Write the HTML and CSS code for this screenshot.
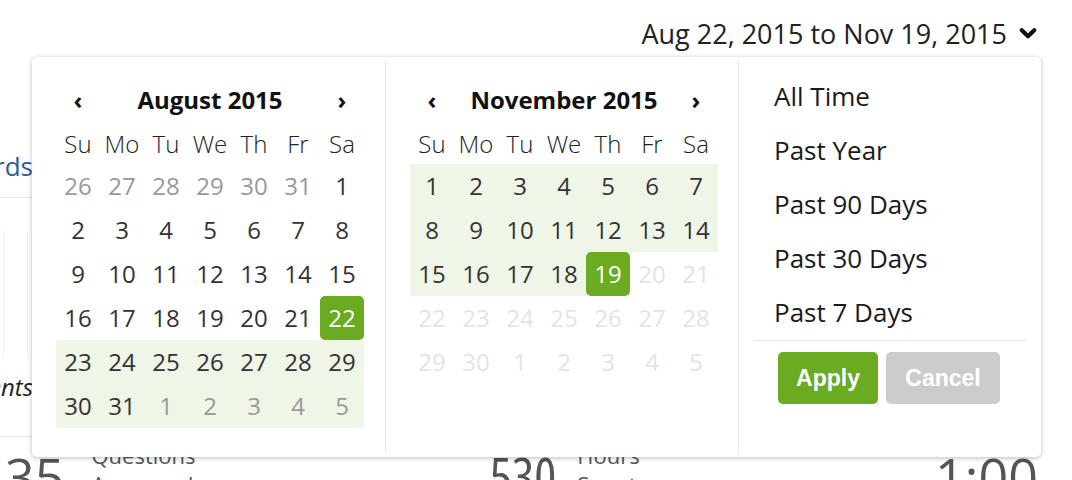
FILE: index.html
```html
<!DOCTYPE html>
<html lang="en">
<head>
<meta charset="utf-8">
<title>Date range picker</title>
<link rel="stylesheet" href="styles.css">
</head>
<body>
<div class="page">
  <header class="topbar">
    <div class="range-toggle">
      <span>Aug 22, 2015 to Nov 19, 2015</span>
      <svg class="chev" viewBox="0 0 17 11" aria-hidden="true"><polyline points="2.3,2.3 8.5,8.3 14.7,2.3" fill="none" stroke="#111" stroke-width="4.2" stroke-linecap="round" stroke-linejoin="round"/></svg>
    </div>
  </header>
  <nav class="tabs">
    <div class="clip tab-link"><span>Leaderboards</span></div>
  </nav>
  <section class="chart">
    <div class="chart-box"></div>
    <div class="clip legend"><span>Assignments</span></div>
  </section>
  <section class="stats">
    <div class="stat"><span class="num">35</span><span class="label">Questions<br>Answered</span></div>
    <div class="stat stat-tight"><span class="num narrow">530</span><span class="label">Hours<br>Spent</span></div>
    <div class="stat"><span class="num">1:00</span></div>
  </section>
</div>

<div class="picker">
  <div class="cal cal-a">
    <div class="grid">
      <div class="nav">&lsaquo;</div><div class="month">August 2015</div><div class="nav">&rsaquo;</div>
      <div class="wd">Su</div><div class="wd">Mo</div><div class="wd">Tu</div><div class="wd">We</div><div class="wd">Th</div><div class="wd">Fr</div><div class="wd">Sa</div>
      <div class="d off">26</div><div class="d off">27</div><div class="d off">28</div><div class="d off">29</div><div class="d off">30</div><div class="d off">31</div><div class="d">1</div>
      <div class="d">2</div><div class="d">3</div><div class="d">4</div><div class="d">5</div><div class="d">6</div><div class="d">7</div><div class="d">8</div>
      <div class="d">9</div><div class="d">10</div><div class="d">11</div><div class="d">12</div><div class="d">13</div><div class="d">14</div><div class="d">15</div>
      <div class="d">16</div><div class="d">17</div><div class="d">18</div><div class="d">19</div><div class="d">20</div><div class="d">21</div><div class="d sel">22</div>
      <div class="d in">23</div><div class="d in">24</div><div class="d in">25</div><div class="d in">26</div><div class="d in">27</div><div class="d in">28</div><div class="d in">29</div>
      <div class="d in">30</div><div class="d in">31</div><div class="d in off">1</div><div class="d in off">2</div><div class="d in off">3</div><div class="d in off">4</div><div class="d in off">5</div>
    </div>
  </div>
  <div class="cal cal-b">
    <div class="grid">
      <div class="nav">&lsaquo;</div><div class="month">November 2015</div><div class="nav">&rsaquo;</div>
      <div class="wd">Su</div><div class="wd">Mo</div><div class="wd">Tu</div><div class="wd">We</div><div class="wd">Th</div><div class="wd">Fr</div><div class="wd">Sa</div>
      <div class="d in">1</div><div class="d in">2</div><div class="d in">3</div><div class="d in">4</div><div class="d in">5</div><div class="d in">6</div><div class="d in">7</div>
      <div class="d in">8</div><div class="d in">9</div><div class="d in">10</div><div class="d in">11</div><div class="d in">12</div><div class="d in">13</div><div class="d in">14</div>
      <div class="d in">15</div><div class="d in">16</div><div class="d in">17</div><div class="d in">18</div><div class="d sel">19</div><div class="d dis">20</div><div class="d dis">21</div>
      <div class="d dis">22</div><div class="d dis">23</div><div class="d dis">24</div><div class="d dis">25</div><div class="d dis">26</div><div class="d dis">27</div><div class="d dis">28</div>
      <div class="d dis">29</div><div class="d dis">30</div><div class="d dis">1</div><div class="d dis">2</div><div class="d dis">3</div><div class="d dis">4</div><div class="d dis">5</div>
    </div>
  </div>
  <div class="ranges">
    <ul class="range-list">
      <li>All Time</li>
      <li>Past Year</li>
      <li>Past 90 Days</li>
      <li>Past 30 Days</li>
      <li>Past 7 Days</li>
    </ul>
    <div class="sep"></div>
    <div class="actions">
      <button class="btn apply" type="button">Apply</button>
      <button class="btn cancel" type="button">Cancel</button>
    </div>
  </div>
</div>
</body>
</html>
```

FILE: styles.css
```css
* { box-sizing: border-box; }
html, body { margin: 0; padding: 0; }
body {
  width: 1072px;
  height: 480px;
  overflow: hidden;
  position: relative;
  background: #fff;
  color: #222;
  font-family: "Open Sans", "DejaVu Sans", sans-serif;
}

/* ---------- page underneath ---------- */
.page { display: flex; flex-direction: column; }

.topbar {
  height: 57px;
  padding: 15px 35px 0 0;
  display: flex;
  justify-content: flex-end;
  align-items: flex-start;
}
.range-toggle {
  display: flex;
  align-items: center;
  gap: 12px;
  font-size: 27px;
  line-height: 37px;
  color: #222;
}
.chev { width: 18px; height: 11px; display: block; }

.clip {
  width: 33px;
  display: flex;
  justify-content: flex-end;
  white-space: nowrap;
}

.tabs {
  margin-top: 92px;
  height: 49px;
  margin-right: 36px;
  border-bottom: 1px solid #e6e6e6;
}
.tab-link {
  font-size: 26px;
  line-height: 35px;
  color: #2d5b94;
}

.chart {
  height: 239px;
  margin-right: 36px;
  padding-top: 32px;
  border-bottom: 1px solid #e6e6e6;
}
.chart-box {
  width: 25px;
  height: 128px;
  margin-left: 3px;
  border-left: 1px solid #f1f1f1;
  border-right: 1px solid #f1f1f1;
}
.legend {
  margin-top: 12px;
  font-size: 24px;
  line-height: 33px;
  font-style: italic;
  color: #222;
}

.stats {
  margin-top: 3px;
  display: grid;
  grid-template-columns: 485px 445px auto;
  padding-left: 5px;
  height: 41px;
  overflow: hidden;
  color: #555;
}
.stat { display: flex; align-items: flex-start; gap: 27px; }
.stat-tight { gap: 21px; }
.num { font-size: 52px; line-height: 71px; }
.num.narrow { font-stretch: 75%; }
.label { font-size: 22px; line-height: 29px; padding-top: 1px; }

/* ---------- picker overlay ---------- */
.picker {
  position: absolute;
  left: 32px;
  top: 57px;
  width: 1009px;
  height: 400px;
  padding: 4px;
  background: #fff;
  border-radius: 5px;
  box-shadow: 0 1px 5px rgba(0, 0, 0, 0.28);
  display: flex;
}

.cal {
  border-right: 1px solid #e6e6e6;
  padding-top: 15px;
}
.cal-a { width: 350px; padding-left: 20px; }
.cal-b { width: 353px; padding-left: 24px; }

.grid {
  display: grid;
  grid-template-columns: repeat(7, 44px);
  grid-auto-rows: 44px;
  font-size: 24px;
  line-height: 44px;
  text-align: center;
}
.nav { font-weight: 700; color: #111; padding-top: 2px; }
.month { grid-column: span 5; font-weight: 700; color: #111; padding-top: 2px; }
.wd { font-weight: 300; color: #222; padding-top: 2px; }
.d { color: #333; }
.d.off { color: #999; }
.d.dis { color: #e4e4e4; }
.d.in { background: #eff5e7; }
.d.sel { background: #6bab22; color: #fff; border-radius: 5px; }

.ranges {
  flex: 1;
  display: flex;
  flex-direction: column;
  padding-top: 8px;
}
.range-list {
  list-style: none;
  margin: 0;
  padding: 0;
}
.range-list li {
  height: 54px;
  line-height: 54px;
  padding-left: 35px;
  font-size: 26px;
  color: #1a1a1a;
}
.sep {
  margin: 1px 11px 0 15px;
  border-top: 1px solid #e6e6e6;
}
.actions {
  margin-top: 11px;
  display: flex;
  justify-content: center;
  gap: 8px;
  padding-left: 2px;
}
.btn {
  height: 52px;
  border: 0;
  border-radius: 5px;
  color: #fff;
  font-family: "Liberation Sans", Arial, sans-serif;
  font-weight: 700;
  font-size: 23px;
  padding: 0;
}
.apply { width: 100px; background: #6bab22; }
.cancel { width: 114px; background: #cccccc; }
```
